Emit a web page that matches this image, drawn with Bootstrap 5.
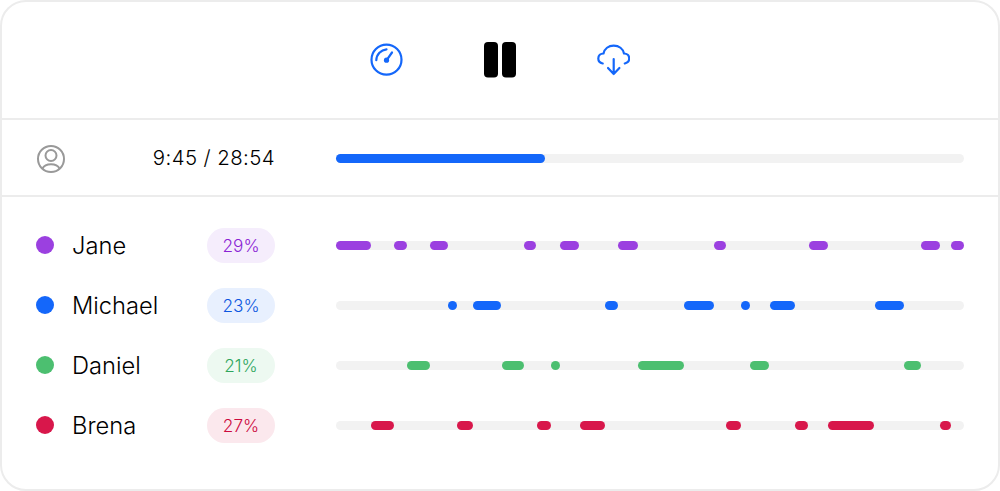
<!DOCTYPE html>
<html lang="en">
<head>
<meta charset="utf-8">
<title>Call playback</title>
<link rel="stylesheet" href="https://cdn.jsdelivr.net/npm/bootstrap@5.3.0/dist/css/bootstrap.min.css">
<style>
html,body{height:100%;background:#fff;}
body{font-family:"Inter","Liberation Sans",sans-serif;color:#111;overflow:hidden;}
.player{width:1000px;height:491px;border:2px solid #ececec;border-radius:26px;overflow:hidden;}
.toolbar{height:118px;gap:80px;border-bottom:2px solid #ececec;}
.progress-row{height:77px;padding:2px 34px 0;border-bottom:2px solid #ececec;}
.side{width:239px;margin-right:61px;flex:none;}
.clock{font-size:20.4px;font-weight:350;letter-spacing:.42px;line-height:1;color:#000;}
.speakers{padding:18px 34px 0;}
.spk-row{height:60px;}
.spk-dot{width:18px;height:18px;border-radius:50%;flex:none;margin-right:18px;background:var(--tone);}
.spk-name{font-size:23.7px;font-weight:350;line-height:1;color:#000;padding-top:1px;}
.spk-pill{width:68px;height:35px;border-radius:17.5px;font-size:17.2px;font-weight:350;padding-top:1px;color:var(--ink);background:var(--tint);}
.rail{height:9px;flex:1 1 auto;background:#f2f2f2;border-radius:5px;position:relative;}
.seg{position:absolute;top:0;height:100%;border-radius:5px;background:var(--tone);}
.tone-purple{--tone:#9b40e0;--tint:#f5edfc;--ink:#8a24d4;}
.tone-blue{--tone:#1467fa;--tint:#e8f0fe;--ink:#0d56e0;}
.tone-green{--tone:#4cbf70;--tint:#edf9f1;--ink:#2fa65e;}
.tone-red{--tone:#d8174b;--tint:#fbe8ed;--ink:#cc0a3e;}
</style>
</head>
<body>
<div class="card player bg-white">
  <div class="toolbar d-flex align-items-center justify-content-center">
    <svg width="34" height="34" viewBox="0 0 34 34" fill="none" stroke="#1467fa" stroke-width="2.2" stroke-linecap="round">
      <circle cx="16.500" cy="16.700" r="15"/>
      <path d="M6.300 17.200C6.500 11.200 11 6.900 16.500 6.300"/>
      <path d="M17 16.700L22 9.500"/>
      <circle cx="16.500" cy="17.200" r="2.600" fill="#1467fa" stroke="none"/>
    </svg>
    <svg width="32" height="36" viewBox="0 0 32 36" fill="#000">
      <rect x="0" y="0" width="14" height="35.500" rx="4"/>
      <rect x="18" y="0" width="14" height="35.500" rx="4"/>
    </svg>
    <svg width="34" height="34" viewBox="0 0 34 34" fill="none" stroke="#1467fa" stroke-width="2.200" stroke-linecap="round" stroke-linejoin="round">
      <path d="M6.700 20.500C3.800 19.800 2.300 18 2.300 15.500C2.300 12.500 4.500 10.500 7.500 10.500C8.500 6 12.500 2.700 17.700 2.700C23 2.700 27 6 28 10.500C31 10.500 33.200 12.500 33.200 15.500C33.200 18 31.700 19.800 28.800 20.500"/>
      <path d="M17.700 16V31M12 25L17.700 31L23.400 25"/>
    </svg>
  </div>

  <div class="progress-row d-flex align-items-center">
    <div class="side d-flex align-items-center justify-content-between">
      <svg width="30" height="30" viewBox="0 0 30 30" fill="none" stroke="#999" stroke-width="2">
        <circle cx="15" cy="15" r="13"/>
        <circle cx="15" cy="11.500" r="5.500"/>
        <path d="M6.500 24.500C8 21.500 11 20.300 15 20.300C19 20.300 22 21.500 23.500 24.500"/>
      </svg>
      <span class="clock">9:45 / 28:54</span>
    </div>
    <div class="rail tone-blue"><span class="seg" style="left:0;width:209px"></span></div>
  </div>

  <div class="speakers">
    <div class="spk-row d-flex align-items-center tone-purple">
      <div class="side d-flex align-items-center">
        <span class="spk-dot"></span><span class="spk-name flex-grow-1">Jane</span>
        <span class="spk-pill d-flex align-items-center justify-content-center">29%</span>
      </div>
      <div class="rail">
        <span class="seg" style="left:0;width:35px"></span>
        <span class="seg" style="left:58px;width:13px"></span>
        <span class="seg" style="left:94px;width:17.500px"></span>
        <span class="seg" style="left:188px;width:12px"></span>
        <span class="seg" style="left:224px;width:19px"></span>
        <span class="seg" style="left:282px;width:19.500px"></span>
        <span class="seg" style="left:378px;width:12px"></span>
        <span class="seg" style="left:472.500px;width:19px"></span>
        <span class="seg" style="left:585px;width:19px"></span>
        <span class="seg" style="left:615px;width:13px"></span>
      </div>
    </div>
    <div class="spk-row d-flex align-items-center tone-blue">
      <div class="side d-flex align-items-center">
        <span class="spk-dot"></span><span class="spk-name flex-grow-1">Michael</span>
        <span class="spk-pill d-flex align-items-center justify-content-center">23%</span>
      </div>
      <div class="rail">
        <span class="seg" style="left:111.500px;width:9.500px"></span>
        <span class="seg" style="left:137px;width:28px"></span>
        <span class="seg" style="left:269px;width:13px"></span>
        <span class="seg" style="left:348px;width:30px"></span>
        <span class="seg" style="left:405px;width:9px"></span>
        <span class="seg" style="left:434px;width:25px"></span>
        <span class="seg" style="left:538.500px;width:29.500px"></span>
      </div>
    </div>
    <div class="spk-row d-flex align-items-center tone-green">
      <div class="side d-flex align-items-center">
        <span class="spk-dot"></span><span class="spk-name flex-grow-1">Daniel</span>
        <span class="spk-pill d-flex align-items-center justify-content-center">21%</span>
      </div>
      <div class="rail">
        <span class="seg" style="left:71px;width:22.500px"></span>
        <span class="seg" style="left:165.500px;width:22px"></span>
        <span class="seg" style="left:215px;width:9px"></span>
        <span class="seg" style="left:302px;width:46px"></span>
        <span class="seg" style="left:414px;width:19px"></span>
        <span class="seg" style="left:568px;width:17px"></span>
      </div>
    </div>
    <div class="spk-row d-flex align-items-center tone-red">
      <div class="side d-flex align-items-center">
        <span class="spk-dot"></span><span class="spk-name flex-grow-1">Brena</span>
        <span class="spk-pill d-flex align-items-center justify-content-center">27%</span>
      </div>
      <div class="rail">
        <span class="seg" style="left:35px;width:22.500px"></span>
        <span class="seg" style="left:121px;width:16px"></span>
        <span class="seg" style="left:200.500px;width:14.500px"></span>
        <span class="seg" style="left:243.500px;width:25px"></span>
        <span class="seg" style="left:390px;width:15px"></span>
        <span class="seg" style="left:459px;width:13px"></span>
        <span class="seg" style="left:492px;width:46px"></span>
        <span class="seg" style="left:604px;width:11px"></span>
      </div>
    </div>
  </div>
</div>
<script src="https://cdn.jsdelivr.net/npm/bootstrap@5.3.0/dist/js/bootstrap.bundle.min.js"></script>
</body>
</html>
